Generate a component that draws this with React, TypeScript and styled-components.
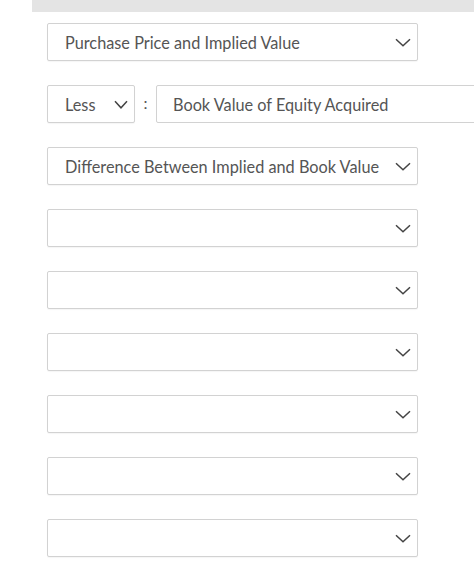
import React from "react";
import styled, { createGlobalStyle } from "styled-components";

const Global = createGlobalStyle`
  html, body { margin: 0; padding: 0; background: #fff; }
  body { font-family: Lato, "Open Sans", sans-serif; overflow: hidden; width: 474px; }
`;

const Page = styled.div`
  width: 474px;
  height: 582px;
  overflow: hidden;
`;

const TopBar = styled.div`
  margin-left: 32px;
  height: 12px;
  background: #e4e4e4;
`;

const List = styled.div`
  display: flex;
  flex-direction: column;
  gap: 24px;
  padding: 11px 0 0 47px;
`;

const Row = styled.div`
  display: flex;
  align-items: center;
`;

const Select = styled.div<{ $w: number }>`
  box-sizing: border-box;
  width: ${(p) => p.$w}px;
  flex: none;
  height: 38px;
  border: 1px solid #d2d2d2;
  border-radius: 2px;
  box-shadow: 0 1px 1px rgba(0, 0, 0, 0.04);
  display: flex;
  align-items: center;
  padding: 0 6px 0 17px;
  color: #555;
  font-size: 16.3px;
  background: #fff;
`;

const Label = styled.span`
  flex: 1;
  white-space: nowrap;
  overflow: hidden;
`;

const Field = styled.div`
  box-sizing: border-box;
  width: 340px;
  flex: none;
  height: 38px;
  border: 1px solid #d2d2d2;
  border-radius: 2px;
  display: flex;
  align-items: center;
  padding: 0 16px;
  color: #555;
  font-size: 16.3px;
  white-space: nowrap;
`;

const Colon = styled.span`
  flex: none;
  width: 21px;
  text-align: center;
  color: #555;
  font-size: 16px;
  margin-top: -4px;
`;

const Chevron = ({ w }: { w: number }) => (
  <svg width={w} height="9" viewBox={`0 0 ${w} 9`} style={{ flex: "none" }}>
    <path
      d={`M1 1.2 L${w / 2} 7.8 L${w - 1} 1.2`}
      fill="none"
      stroke="#444"
      strokeWidth="1.5"
    />
  </svg>
);

const Dropdown = ({ w, label, c = 16 }: { w: number; label?: string; c?: number }) => (
  <Select $w={w}>
    <Label>{label}</Label>
    <Chevron w={c} />
  </Select>
);

export default function App() {
  return (
    <Page>
      <Global />
      <TopBar />
      <List>
        <Dropdown w={371} label="Purchase Price and Implied Value" />
        <Row>
          <Dropdown w={88} label="Less" c={14} />
          <Colon>:</Colon>
          <Field>Book Value of Equity Acquired</Field>
        </Row>
        <Dropdown w={371} label="Difference Between Implied and Book Value" />
        <Dropdown w={371} />
        <Dropdown w={371} />
        <Dropdown w={371} />
        <Dropdown w={371} />
        <Dropdown w={371} />
        <Dropdown w={371} />
      </List>
    </Page>
  );
}
